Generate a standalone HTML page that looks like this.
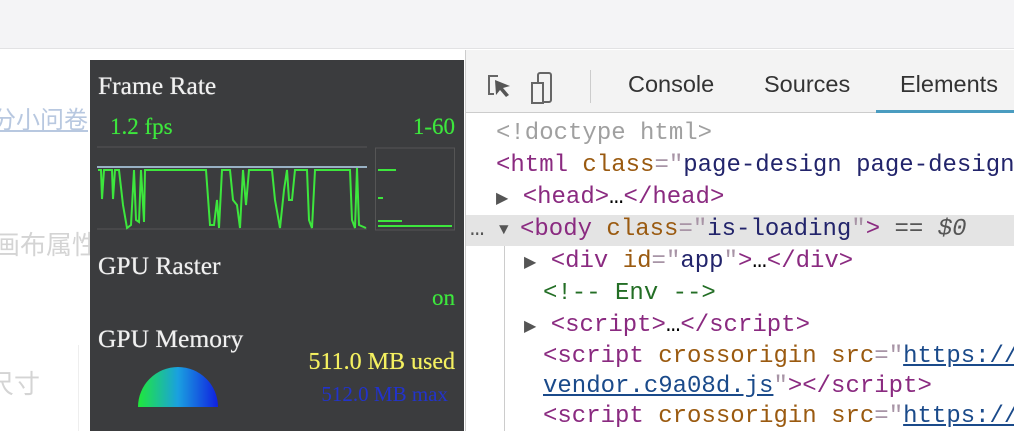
<!DOCTYPE html>
<html><head><meta charset="utf-8"><style>
*{margin:0;padding:0;box-sizing:border-box}
body{width:1014px;height:431px;overflow:hidden;background:#fff;position:relative;font-family:"Liberation Sans","Noto Sans CJK SC",sans-serif}
.top{position:absolute;left:0;top:0;width:1014px;height:49px;background:#f4f4f6;border-bottom:1px solid #e2e2e4}
.cn{position:absolute;color:#d4d4d4;font-size:26px;font-family:"Liberation Sans","Noto Sans CJK SC",sans-serif}
.panel{position:absolute;left:90px;top:60px;width:374px;height:371px;background:#3b3c3e;font-family:"Liberation Serif",serif}
.panel div{position:absolute}
.w{color:#f0f0f0;font-size:25.5px;text-shadow:0 0 0.6px #f0f0f0}
.g{color:#3de63d;font-size:23px;text-shadow:0 0 0.5px #3de63d}
.dt{position:absolute;left:465px;top:50px;width:549px;height:381px;background:#fff;border-left:1px solid #ccc}
.tb{position:absolute;left:0;top:0;width:549px;height:63px;background:#f3f3f3;border-bottom:1px solid #ccc}
.tab{position:absolute;top:21px;font-size:23.5px;color:#333}
.code{position:absolute;font-family:"Liberation Mono",monospace;font-size:24px;white-space:pre;line-height:32px}
.t{color:#8a2a80}.a{color:#9a5a10}.v{color:#22246b}.p{color:#a894a6}.c{color:#236e25}.gr{color:#a0a0a0}
.u{text-decoration:underline;color:#1a4a8a}
</style></head><body>
<div class="top"></div>
<div class="cn" style="left:-8px;top:100px;color:#b8c8e0;font-size:24px;text-decoration:underline">分小问卷</div>
<div class="cn" style="left:-6px;top:225px">画布属性</div>
<div class="cn" style="left:-12px;top:364px">尺寸</div>
<div style="position:absolute;left:78px;top:345px;width:12px;height:86px;border-left:1px solid #eee"></div>
<div class="panel">
<div class="w" style="left:8px;top:11px">Frame Rate</div>
<div class="g" style="left:20px;top:54px">1.2 fps</div>
<div class="g" style="right:9px;top:54px">1-60</div>
<div class="w" style="left:8px;top:191px">GPU Raster</div>
<div class="g" style="right:9px;top:225px">on</div>
<div class="w" style="left:8px;top:264px">GPU Memory</div>
<div style="right:9px;top:289px;color:#f4f060;font-size:24px;text-shadow:0 0 0.5px #f4f060">511.0 MB used</div>
<div style="right:16px;top:322px;color:#2233cc;font-size:21px">512.0 MB max</div>
</div>
<svg style="position:absolute;left:0;top:0" width="470" height="431">
<defs><linearGradient id="gg" x1="0" x2="1"><stop offset="0" stop-color="#1fe83a"/><stop offset="0.5" stop-color="#1aa0e0"/><stop offset="1" stop-color="#1020e0"/></linearGradient></defs>
<line x1="97" y1="147" x2="367" y2="147" stroke="#555" stroke-width="1"/>
<line x1="97" y1="229" x2="367" y2="229" stroke="#555" stroke-width="1"/>
<line x1="97" y1="167" x2="367" y2="167" stroke="#b8d8f0" stroke-width="1.5"/>
<rect x="375.5" y="148" width="79" height="82" fill="none" stroke="#555"/>
<polyline fill="none" stroke="#3de63d" stroke-width="2" points="98,170 101,170 102,199 104,170 112,170 113,199 115,170 119,170 123,205 127,228 131,225 134,170 136,220 139,222 141,170 144,222 145,170 206,170 210,225 214,225 217,200 219,228 222,170 230,170 233,200 237,205 240,228 243,170 246,205 249,170 272,170 275,200 280,228 284,190 287,170 289,200 292,200 295,170 307,170 309,220 312,228 315,170 350,170 352,220 355,228 357,168 359,225 366,228"/>
<g stroke="#3de63d" stroke-width="2"><line x1="378" y1="170" x2="396" y2="170"/><line x1="378" y1="198" x2="383" y2="198"/><line x1="378" y1="221" x2="402" y2="221"/><line x1="378" y1="226" x2="452" y2="226"/></g>
<path d="M138,407 A40,40 0 0 1 218,407 Z" fill="url(#gg)"/>
</svg>
<div class="dt">
<div class="tb">
<svg style="position:absolute;left:20px;top:22px" width="70" height="32">
<path d="M12,4 H3 V22 H8" fill="none" stroke="#666" stroke-width="2"/><path d="M9,8 L24,14 L17,16 L23,23 L20,25 L14,18 L10,23 Z" fill="#555"/>
<rect x="52" y="1" width="13" height="29" rx="2" fill="none" stroke="#666" stroke-width="2"/><rect x="46" y="11" width="11" height="20" fill="#f3f3f3" stroke="#666" stroke-width="2"/>
</svg>
<div style="position:absolute;left:124px;top:20px;width:1px;height:33px;background:#ccc"></div>
<div class="tab" style="left:162px">Console</div>
<div class="tab" style="left:298px">Sources</div>
<div class="tab" style="left:434px">Elements</div>
<div style="position:absolute;left:410px;top:60px;width:139px;height:3px;background:#4a9cc0"></div>
</div>
<div style="position:absolute;left:0;top:165px;width:549px;height:31px;background:#e4e4e4"></div>
<div style="position:absolute;left:38px;top:196px;width:1px;height:185px;background:#ccc"></div>
<div class="code" style="left:30px;top:68px"><span class="gr">&lt;!doctype html&gt;</span>
<span class="t">&lt;html</span> <span class="a">class</span><span class="p">="</span><span class="v">page-design page-design</span>
<span style="font-size:16px;color:#555">▶</span> <span class="t">&lt;head&gt;</span>…<span class="t">&lt;/head&gt;</span></div>
<div class="code" style="left:4px;top:164px;color:#555">…</div>
<div class="code" style="left:33px;top:164px;font-size:16px;color:#555">▼</div>
<div class="code" style="left:54px;top:164px"><span class="t">&lt;body</span> <span class="a">class</span><span class="p">="</span><span class="v">is-loading</span><span class="p">"</span><span class="t">&gt;</span> <span style="color:#555">== <i>$0</i></span></div>
<div class="code" style="left:58px;top:196px"><span style="font-size:16px;color:#555">▶</span> <span class="t">&lt;div</span> <span class="a">id</span><span class="p">="</span><span class="v">app</span><span class="p">"</span><span class="t">&gt;</span>…<span class="t">&lt;/div&gt;</span></div>
<div class="code" style="left:77px;top:228px"><span class="c">&lt;!-- Env --&gt;</span></div>
<div class="code" style="left:58px;top:260px"><span style="font-size:16px;color:#555">▶</span> <span class="t">&lt;script&gt;</span>…<span class="t">&lt;/script&gt;</span></div>
<div class="code" style="left:77px;top:292px;line-height:30px"><span class="t">&lt;script</span> <span class="a">crossorigin</span> <span class="a">src</span><span class="p">="</span><span class="u">https://</span>
<span class="u">vendor.c9a08d.js</span><span class="p">"</span><span class="t">&gt;&lt;/script&gt;</span>
<span class="t">&lt;script</span> <span class="a">crossorigin</span> <span class="a">src</span><span class="p">="</span><span class="u">https://</span></div>
</div>
</body></html>
